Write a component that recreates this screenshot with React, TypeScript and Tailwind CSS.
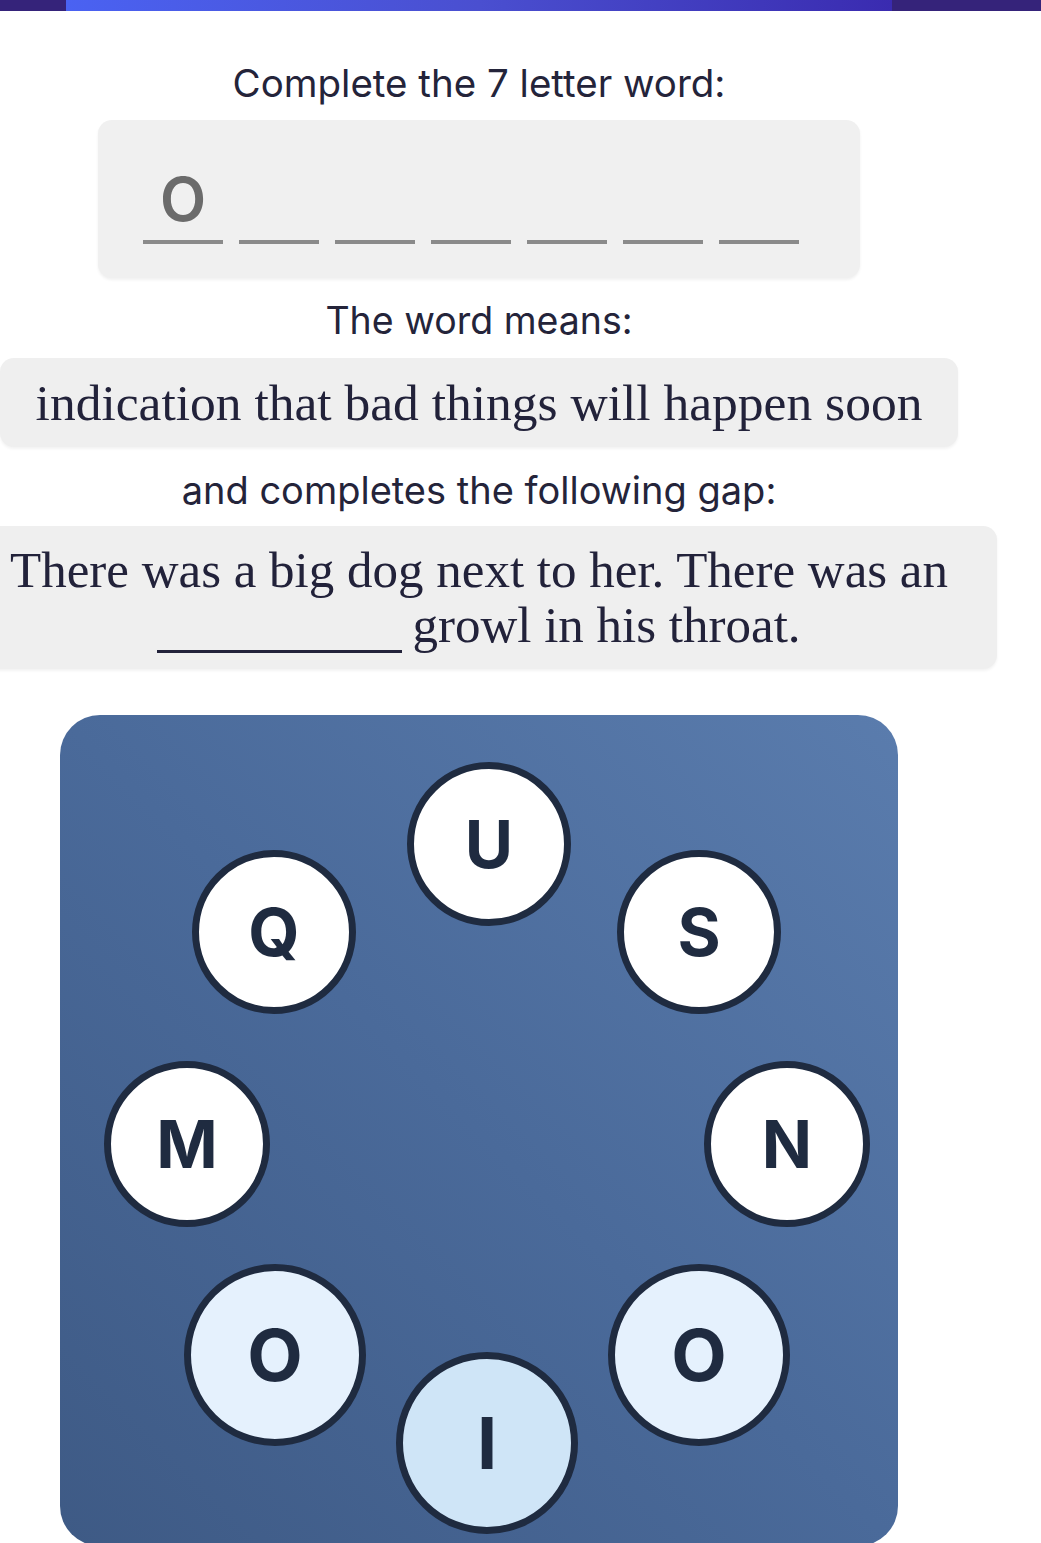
import React from "react";

const sans = { fontFamily: "Inter, 'Noto Sans', sans-serif" };
const serif = { fontFamily: "'Liberation Serif', 'DejaVu Serif', serif" };

type C = { l: string; left: number; top: number; d: number; bg: string; fs: number };
const circles: C[] = [
  { l: "U", left: 347, top: 47, d: 164, bg: "#ffffff", fs: 66 },
  { l: "Q", left: 132, top: 135, d: 164, bg: "#ffffff", fs: 66 },
  { l: "S", left: 557, top: 135, d: 164, bg: "#ffffff", fs: 66 },
  { l: "M", left: 44, top: 346, d: 166, bg: "#ffffff", fs: 66 },
  { l: "N", left: 644, top: 346, d: 166, bg: "#ffffff", fs: 66 },
  { l: "O", left: 124, top: 549, d: 182, bg: "#e5f1fd", fs: 72 },
  { l: "I", left: 336, top: 637, d: 182, bg: "#cfe5f7", fs: 72 },
  { l: "O", left: 548, top: 549, d: 182, bg: "#e5f1fd", fs: 72 },
];

export default function App() {
  return (
    <div className="w-[1041px] h-[1543px] overflow-hidden bg-white relative">
      <div className="h-[11px] w-full bg-[#35237a] flex">
        <div className="ml-[66px] w-[826px] h-full bg-linear-to-r from-[#4a62f2] via-[#4a4fd0] to-[#3a2bb0]" />
      </div>
      <div className="w-[958px] flex flex-col items-center" style={sans}>
        <div className="mt-[52px] h-[40px] text-[38.5px] leading-[40px] text-[#24243a] whitespace-nowrap">Complete the 7 letter word:</div>
        <div className="mt-[17px] w-[762px] h-[158px] rounded-[14px] bg-[#f0f0f0] shadow-[0_2px_3px_rgba(0,0,0,0.06)] pl-[45px] pt-[46px]">
          <div className="flex gap-[16px]">
            {Array.from({ length: 7 }).map((_, i) => (
              <div key={i} className="w-[80px] flex flex-col items-center">
                <div className="h-[66px] text-[60px] leading-[66px] font-semibold text-[#6b6b6b]">{i === 0 ? "O" : ""}</div>
                <div className="mt-[8px] w-[80px] h-[4px] bg-[#8a8a8a]" />
              </div>
            ))}
          </div>
        </div>
        <div className="mt-[23px] h-[40px] text-[37.5px] leading-[40px] text-[#24243a] whitespace-nowrap">The word means:</div>
        <div className="mt-[17px] w-[958px] h-[89px] rounded-[14px] bg-[#efefef] shadow-[0_2px_3px_rgba(0,0,0,0.05)] flex items-center justify-center">
          <span className="text-[51.5px] leading-[56px] text-[#22223a] whitespace-nowrap" style={serif}>indication that bad things will happen soon</span>
        </div>
        <div className="mt-[23px] h-[40px] text-[38px] leading-[40px] text-[#24243a] whitespace-nowrap">and completes the following gap:</div>
        <div className="mt-[16px] w-[1036px] shrink-0 h-[143px] rounded-[14px] bg-[#efefef] shadow-[0_2px_3px_rgba(0,0,0,0.05)] flex flex-col items-center justify-center text-[51px] leading-[55px] text-[#22223a] whitespace-nowrap" style={serif}>
          <div>There was a big dog next to her. There was an</div>
          <div className="flex items-end">
            <span className="inline-block w-[245px] h-[44px] border-b-[3px] border-[#22223a] mr-[10px]" />
            <span>growl in his throat.</span>
          </div>
        </div>
        <div className="mt-[46px] w-[838px] h-[831px] shrink-0 rounded-[40px] bg-linear-to-bl from-[#5a7cad] via-[#4a6a9a] to-[#3e5a85] relative">
          {circles.map((c, i) => (
            <div
              key={i}
              className="absolute rounded-full border-[7px] border-[#1f2b40] flex items-center justify-center font-bold text-[#1f2b40] leading-none"
              style={{ left: c.left, top: c.top, width: c.d, height: c.d, background: c.bg, fontSize: c.fs }}
            >
              {c.l}
            </div>
          ))}
        </div>
      </div>
    </div>
  );
}
